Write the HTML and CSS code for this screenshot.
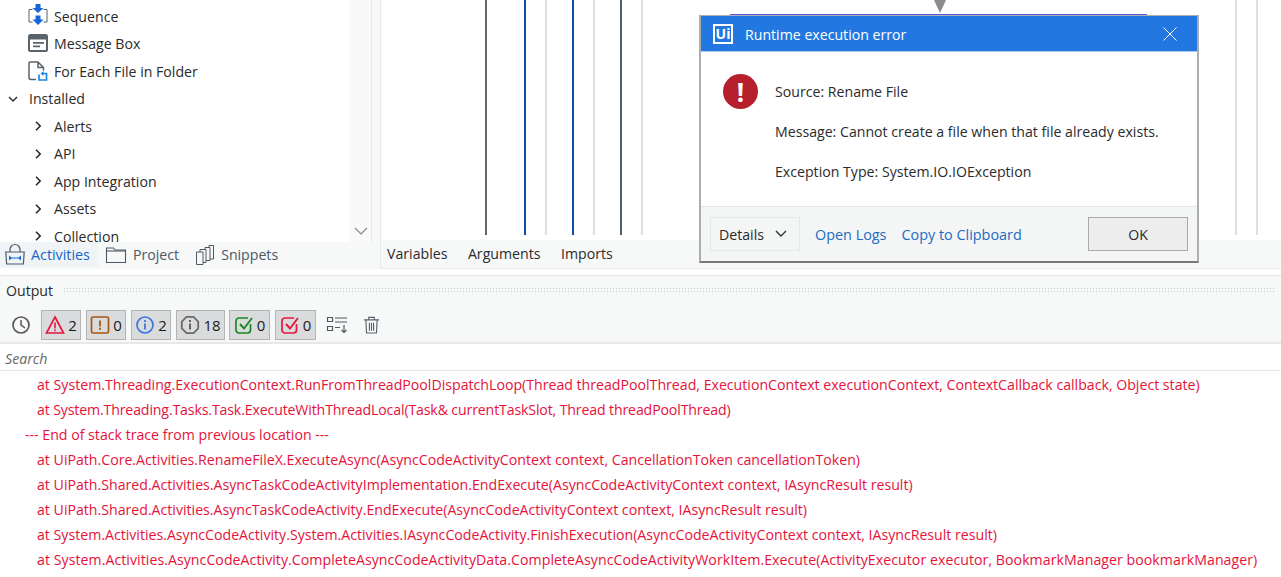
FILE: index.html
```html
<!DOCTYPE html>
<html lang="en">
<head>
<meta charset="utf-8">
<title>Runtime execution error</title>
<link rel="stylesheet" href="styles.css">
</head>
<body>
<div class="top">
  <aside class="left">
    <div class="tree-wrap">
      <div class="tree">
        <div class="row l1"><svg class="ico" viewBox="0 0 20 20"><path d="M4.500 3.500H1v12.500h3.500M15.500 3.500H19v12.500h-3.500" fill="none" stroke="#59636b" stroke-width="1"/><path d="M7.500-2h5v4h3l-5.500 5-5.500-5h3zM7.500 9.500h5v4h3l-5.500 5.500-5.500-5.500h3z" fill="#1666d8"/></svg><span>Sequence</span></div>
        <div class="row l1"><svg class="ico" viewBox="0 0 20 20"><rect x="0" y="0" width="20" height="18" rx="2.500" fill="#59636b"/><rect x="2" y="5.500" width="16" height="10.500" fill="#fff"/><path d="M5 8h11v1.700H5zM5 11.500h7v1.700H5z" fill="#59636b"/></svg><span>Message Box</span></div>
        <div class="row l1"><svg class="ico" viewBox="0 0 20 20"><path d="M8 18.500H3a2 2 0 0 1-2-2V2a1 1 0 0 1 1-1h8l5.500 5.500v3M10 1v5.500h5.500" fill="none" stroke="#59636b" stroke-width="1.500"/><path d="M11 13.500v5.500h7.500V12.500H15" fill="none" stroke="#1f86e0" stroke-width="1.700"/><path d="M15.500 10v5l-3-2.500z" fill="#1f86e0"/></svg><span>For Each File in Folder</span></div>
        <div class="row l0"><svg class="chev" viewBox="0 0 10 10"><path d="M1 3l4 4 4-4" fill="none" stroke="#333" stroke-width="1.500"/></svg><span>Installed</span></div>
        <div class="row l2"><svg class="chev" viewBox="0 0 10 10"><path d="M3 .8l4.200 4.200L3 9.200" fill="none" stroke="#222" stroke-width="1.500"/></svg><span>Alerts</span></div>
        <div class="row l2"><svg class="chev" viewBox="0 0 10 10"><path d="M3 .8l4.200 4.200L3 9.200" fill="none" stroke="#222" stroke-width="1.500"/></svg><span>API</span></div>
        <div class="row l2"><svg class="chev" viewBox="0 0 10 10"><path d="M3 .8l4.200 4.200L3 9.200" fill="none" stroke="#222" stroke-width="1.500"/></svg><span>App Integration</span></div>
        <div class="row l2"><svg class="chev" viewBox="0 0 10 10"><path d="M3 .8l4.200 4.200L3 9.200" fill="none" stroke="#222" stroke-width="1.500"/></svg><span>Assets</span></div>
        <div class="row l2"><svg class="chev" viewBox="0 0 10 10"><path d="M3 .8l4.200 4.200L3 9.200" fill="none" stroke="#222" stroke-width="1.500"/></svg><span>Collection</span></div>
      </div>
      <div class="scroll"><svg class="scroll-down" viewBox="0 0 14 8"><path d="M1 1l6 6 6-6" fill="none" stroke="#888" stroke-width="1.200"/></svg></div>
    </div>
    <div class="tabs">
      <div class="tab active"><svg class="tab-ico" viewBox="0 0 20 20"><path d="M.8 7h18.400l-.8 12H1.600zM5 7V4.500a5 5 0 0 1 10 0V7" fill="none" stroke="#4d5a66" stroke-width="1.200"/><path d="M4 10.500l2.500 2h7l2.500-2v5l-2.500-2h-7l-2.500 2z" fill="#1666d8"/></svg><span>Activities</span></div>
      <div class="tab t-project"><svg class="tab-ico" viewBox="0 0 20 20"><path d="M.5 17.500V3h7l1.500 2h10.500v12.500z" fill="none" stroke="#4d5a66" stroke-width="1.100"/><path d="M.5 6h19" stroke="#4d5a66" stroke-width="1.100"/></svg><span>Project</span></div>
      <div class="tab t-snip"><svg class="tab-ico narrow" viewBox="0 0 18 20"><path d="M.5 7h6.500v12.500H.5zM4 7V4.500h6v13H7M9 4.500V2.500h5v13h-4M13 2.500V.5h4.500V14H14" fill="none" stroke="#4d5a66" stroke-width="1"/></svg><span>Snippets</span></div>
    </div>
  </aside>
  <main class="center">
    <div class="canvas">
      <i class="vline dark" style="left:104px"></i>
      <i class="vline blue" style="left:143px"></i>
      <i class="vline pale" style="left:164px"></i>
      <i class="vline blue" style="left:191px"></i>
      <i class="vline pale" style="left:212px"></i>
      <i class="vline slate" style="left:239px"></i>
      <i class="vline pale" style="left:260px"></i>
      <i class="vline pale" style="left:854px"></i>
      <i class="vline pale" style="left:875px"></i>
      <i class="seq-top"></i>
      <svg class="arrow" viewBox="0 0 12 13"><path d="M0 0h12L6 13z" fill="#8c8c8c"/></svg>
    </div>
    <div class="subtabs"><span>Variables</span><span>Arguments</span><span>Imports</span></div>
  </main>
</div>
<section class="output">
  <div class="out-head"><span>Output</span><div class="grip"></div></div>
  <div class="toolbar">
    <svg class="clock" viewBox="0 0 20 20"><circle cx="10" cy="10" r="8" fill="none" stroke="#59595b" stroke-width="1.700"/><path d="M10 5v5l4 3" fill="none" stroke="#59595b" stroke-width="1.500"/></svg>
    <div class="chip c40"><svg viewBox="0 0 20 20"><path d="M10 2l8.500 16h-17z" fill="none" stroke="#e8173f" stroke-width="1.700"/><path d="M9.200 7.500h1.600v6H9.200zM9.200 14.500h1.600v1.800H9.200z" fill="#e8173f"/></svg><span>2</span></div>
    <div class="chip c40"><svg viewBox="0 0 20 20"><rect x="1.500" y="2" width="17" height="16" rx="1.500" fill="none" stroke="#a9560e" stroke-width="1.700"/><path d="M9.100 5.500h1.800v6H9.100zM9.100 12.800h1.800v1.900H9.100z" fill="#a9560e"/></svg><span>0</span></div>
    <div class="chip c40"><svg viewBox="0 0 20 20"><circle cx="10" cy="10" r="8" fill="none" stroke="#3f74e0" stroke-width="1.700"/><path d="M9.100 8.500h1.800v6H9.100zM9.100 5h1.800v2H9.100z" fill="#3f74e0"/></svg><span>2</span></div>
    <div class="chip c49"><svg viewBox="0 0 20 20"><path d="M6.500 1.800h7l4.700 4.700v7l-4.700 4.700h-7L1.800 13.500v-7z" fill="none" stroke="#6a6a6a" stroke-width="1.800"/><path d="M9.100 8.500h1.800v6H9.100zM9.100 5h1.800v2H9.100z" fill="#555"/></svg><span>18</span></div>
    <div class="chip c41"><svg viewBox="0 0 20 20"><path d="M16.500 9v6a3 3 0 0 1-3 3H5a3 3 0 0 1-3-3V6a3 3 0 0 1 3-3h9" fill="none" stroke="#1b8a25" stroke-width="1.700"/><path d="M6 9l4 4.500L18 3" fill="none" stroke="#1b8a25" stroke-width="1.900"/></svg><span>0</span></div>
    <div class="chip c41"><svg viewBox="0 0 20 20"><path d="M16.500 9v6a3 3 0 0 1-3 3H5a3 3 0 0 1-3-3V6a3 3 0 0 1 3-3h9" fill="none" stroke="#e8173f" stroke-width="1.700"/><path d="M6 9l4 4.500L18 3" fill="none" stroke="#e8173f" stroke-width="1.900"/></svg><span>0</span></div>
    <svg class="sort" viewBox="0 0 22 20"><path d="M1.500 2.500h5v4h-5zM1.500 11.500h5v4h-5z" fill="none" stroke="#4d5a66" stroke-width="1.200"/><path d="M9 3h12M9 7h12M9 12.500h5" stroke="#4d5a66" stroke-width="1.200"/><path d="M18 10v7M15.500 15l2.500 2.500 2.500-2.500" fill="none" stroke="#4d5a66" stroke-width="1.200"/></svg>
    <svg class="trash" viewBox="0 0 16 18"><path d="M0 3.500h16M5 3.500V.8h6v2.700M2 3.500l.7 14h10.600l.7-14M5.800 6.500v8.500M8 6.500v8.500M10.200 6.500v8.500" fill="none" stroke="#59636b" stroke-width="1.200"/></svg>
  </div>
  <div class="search">Search</div>
  <div class="log">
    <div class="ln">at System.Threading.ExecutionContext.RunFromThreadPoolDispatchLoop(Thread threadPoolThread, ExecutionContext executionContext, ContextCallback callback, Object state)</div>
    <div class="ln tight">at System.Threading.Tasks.Task.ExecuteWithThreadLocal(Task&amp; currentTaskSlot, Thread threadPoolThread)</div>
    <div class="ln end">--- End of stack trace from previous location ---</div>
    <div class="ln">at UiPath.Core.Activities.RenameFileX.ExecuteAsync(AsyncCodeActivityContext context, CancellationToken cancellationToken)</div>
    <div class="ln">at UiPath.Shared.Activities.AsyncTaskCodeActivityImplementation.EndExecute(AsyncCodeActivityContext context, IAsyncResult result)</div>
    <div class="ln">at UiPath.Shared.Activities.AsyncTaskCodeActivity.EndExecute(AsyncCodeActivityContext context, IAsyncResult result)</div>
    <div class="ln">at System.Activities.AsyncCodeActivity.System.Activities.IAsyncCodeActivity.FinishExecution(AsyncCodeActivityContext context, IAsyncResult result)</div>
    <div class="ln wide">at System.Activities.AsyncCodeActivity.CompleteAsyncCodeActivityData.CompleteAsyncCodeActivityWorkItem.Execute(ActivityExecutor executor, BookmarkManager bookmarkManager)</div>
  </div>
</section>
<div class="dialog">
  <header class="d-title">
    <div class="logo"><span>Ui</span></div>
    <div class="d-name">Runtime execution error</div>
    <svg class="d-close" viewBox="0 0 14 14"><path d="M.5.500l13 13M13.500.500l-13 13" stroke="#fff" stroke-width="1"/></svg>
  </header>
  <div class="d-body">
    <div class="err"><span>!</span></div>
    <div class="d-text">
      <p>Source: Rename File</p>
      <p>Message: Cannot create a file when that file already exists.</p>
      <p>Exception Type: System.IO.IOException</p>
    </div>
  </div>
  <footer class="d-foot">
    <div class="details"><span>Details</span><svg viewBox="0 0 12 8"><path d="M1 1l5 5 5-5" fill="none" stroke="#333" stroke-width="1.400"/></svg></div>
    <a class="lnk">Open Logs</a>
    <a class="lnk">Copy to Clipboard</a>
    <div class="ok">OK</div>
  </footer>
</div>
</body>
</html>
```
FILE: styles.css
```css
* { box-sizing: border-box; }
html, body { margin: 0; padding: 0; }
body {
  width: 1281px; height: 577px; overflow: hidden; position: relative;
  background: #fff; color: #2b2b2b;
  font-family: "Open Sans", "Noto Sans", sans-serif; font-size: 14.15px;
}
svg { overflow: visible; }
.top { display: flex; height: 269px; background: #f7f8f8; }
.left { width: 372px; display: flex; flex-direction: column; }
.tree-wrap { height: 242px; display: flex; background: #fff; overflow: hidden; border-right: 1px solid #e8eaea; }
.tree { width: 350px; padding-top: 2.6px; }
.scroll { width: 21px; background: #f9f9f9; display: flex; align-items: flex-end; justify-content: center; padding-bottom: 7px; }
.scroll-down { width: 14px; height: 8px; }
.row { height: 27.5px; display: flex; align-items: center; white-space: nowrap; }
.l1 { padding-left: 28px; }
.l0 { padding-left: 8px; }
.l2 { padding-left: 33px; }
.ico { width: 20px; height: 20px; margin-right: 6px; flex: none; }
.chev { width: 10px; height: 10px; flex: none; margin-right: 11px; }
.tabs { height: 25px; display: flex; background: #f7f8f8; }
.tab { display: flex; align-items: center; height: 25px; color: #4d5a66; }
.tab span { margin-left: 7px; }
.tab.active { width: 98px; padding-left: 5px; color: #1666c8; background: #f1f4f6; }
.tab.active span { margin-left: 6px; font-size: 14.3px; }
.t-project { margin-left: 8px; }
.t-snip { margin-left: 17px; }
.tab-ico { width: 20px; height: 20px; }
.tab-ico.narrow { width: 18px; }
.center { flex: 1; margin-left: 8px; display: flex; flex-direction: column; border-left: 1px solid #e8eaea; }
.canvas { height: 240px; background: #fff; position: relative; overflow: hidden; }
.vline { position: absolute; top: 0; height: 235px; width: 2px; }
.dark { background: #666; }
.blue { background: #0a4ea6; }
.slate { background: #4f5f6b; }
.pale { background: #dae1e7; }
.seq-top { position: absolute; left: 349px; top: 14px; width: 417px; height: 1px; background: #5a5ae0; }
.arrow { position: absolute; left: 553px; top: 0; width: 12px; height: 13px; }
.subtabs { flex: 1; display: flex; align-items: center; gap: 20.5px; padding: 0 0 2px 6px; background: #f7f8f8; border-bottom: 1px solid #e8eaea; }
.output { background: #f7f8f8; }
.out-head { height: 29px; padding: 0 6px; display: flex; align-items: center; gap: 10px; border-top: 1px solid #e6e8e8; margin-top: 6px; }
.grip { flex: 1; height: 7px; background-image: radial-gradient(#c9c9c9 0.8px, transparent 1px); background-size: 3px 3px; }
.toolbar { height: 38px; display: flex; align-items: center; padding: 4px 0 0 11px; }
.clock { width: 20px; height: 20px; margin-right: 10px; }
.chip { height: 30px; display: flex; align-items: center; justify-content: center; gap: 3px; background: #d9dbdd; border: 1px solid #b4b4b4; margin-right: 5px; color: #1a1a1a; font-size: 15px; }
.chip svg { width: 20px; height: 20px; }
.c40 { width: 40px; }
.c49 { width: 49px; margin-right: 4px; }
.c41 { width: 41px; }
.sort { width: 22px; height: 20px; margin-left: 5px; }
.trash { width: 15px; height: 18px; margin-left: 16px; }
.search { height: 29px; background: #fff; border-top: 2px solid #e8e8e8; border-bottom: 1px solid #e8e8e8; padding: 2px 0 0 5px; font-style: italic; color: #666; display: flex; align-items: center; }
.log { background: #fff; height: 206px; padding-top: 1px; overflow: hidden; color: #e6123a; }
.ln { height: 25px; line-height: 25px; padding-left: 37px; white-space: nowrap; }
.ln.end { padding-left: 25px; }
.ln.tight { letter-spacing: -0.14px; }
.ln.wide { letter-spacing: 0.05px; }
.dialog { position: absolute; left: 699px; top: 15px; width: 500px; height: 248px; background: #fff; border: 2px solid #adadad; border-bottom-color: #777; border-top-width: 1px; display: flex; flex-direction: column; }
.d-title { height: 36px; flex: none; background: #2278e0; display: flex; align-items: center; padding-left: 12px; color: #fff; border-bottom: 1px solid #a9cdf3; }
.logo { width: 20px; height: 20px; border: 2px solid #fff; display: flex; align-items: center; justify-content: center; font-weight: 700; font-size: 14px; }
.d-name { margin-left: 12px; flex: 1; padding-top: 1px; }
.d-close { width: 14px; height: 14px; margin-right: 20px; }
.d-body { flex: 1; display: flex; padding: 22px 0 0 22px; }
.err { width: 35px; height: 35px; border-radius: 50%; background: #b5202c; color: #fff; display: flex; align-items: center; justify-content: center; font-weight: 700; font-size: 26px; flex: none; }
.d-text { margin-left: 17px; padding-top: 8px; }
.d-text p { margin: 0 0 20px; line-height: 20px; }
.d-foot { height: 55px; flex: none; background: #f4f5f5; border-top: 1px solid #e4e6e6; display: flex; align-items: center; padding: 0 9px; }
.details { width: 90px; height: 34px; border: 1px solid #e6e8e8; display: flex; align-items: center; padding-left: 8px; gap: 11px; }
.details svg { width: 12px; height: 8px; }
.lnk { color: #1a6cc4; margin-left: 15px; font-size: 14.4px; }
.ok { margin-left: auto; width: 100px; height: 34px; background: #ededee; border: 1px solid #aaa; display: flex; align-items: center; justify-content: center; }
```
